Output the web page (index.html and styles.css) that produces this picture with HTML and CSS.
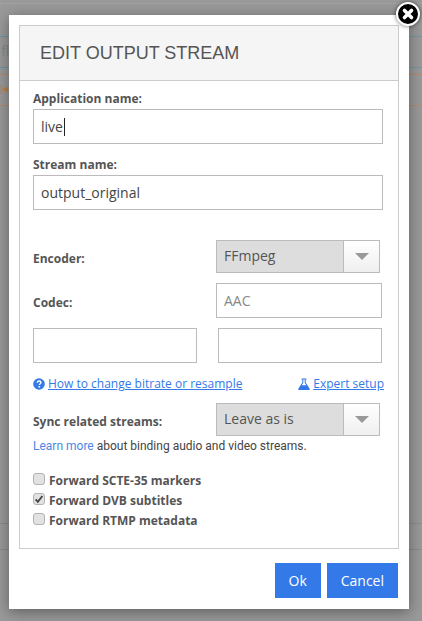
FILE: index.html
```html
<!DOCTYPE html>
<html lang="en">
<head>
  <meta charset="UTF-8" />
  <title>Edit output stream</title>
  <link rel="stylesheet" href="styles.css">
</head>
<body>

  <div class="backdrop">
    <div class="bg-dots"></div>
    <div class="bg-text">fl</div>
    <svg class="bg-icon" width="9" height="9" viewBox="0 0 9 9">
      <path d="M3 1H0.700V8H3" fill="none" stroke="#a98a74" stroke-width="1"/>
      <path d="M2.500 3.500H5.500V1L9 4.500 5.500 8V5.500H2.500Z" fill="#c08048"/>
    </svg>
    <div class="bg-line teal line-1"></div>
    <div class="bg-line teal line-2"></div>
    <div class="bg-line orange line-3"></div>
    <div class="bg-line orange line-4"></div>
    <div class="bg-line grey line-5"></div>
    <div class="bg-line grey line-6"></div>
  </div>

  <div class="modal">
    <a class="close-btn">
      <svg width="20" height="20" viewBox="0 0 20 20">
        <path d="M6.500 6.500 13.500 13.500M13.500 6.500 6.500 13.500" stroke="#fff" stroke-width="3.600" stroke-linecap="round"/>
      </svg>
    </a>

    <div class="panel">
      <div class="panel-head">
        <h2>EDIT OUTPUT STREAM</h2>
      </div>

      <div class="panel-body">
        <label class="field-label">Application name:</label>
        <div class="input input-active">live<span class="caret"></span></div>

        <label class="field-label second">Stream name:</label>
        <div class="input">output_original</div>

        <div class="row encoder-row">
          <label class="field-label">Encoder:</label>
          <div class="select">
            <span class="select-value">FFmpeg</span>
            <span class="select-arrow"><i></i></span>
          </div>
        </div>

        <div class="row codec-row">
          <label class="field-label">Codec:</label>
          <div class="input codec-input">AAC</div>
        </div>

        <div class="pair">
          <div class="input"></div>
          <div class="input"></div>
        </div>

        <div class="links">
          <a class="link">
            <svg width="12" height="12" viewBox="0 0 12 12">
              <circle cx="6" cy="6" r="5.800" fill="#337ae8"/>
              <path d="M4.200 4.700C4.300 3.600 5 3 6.100 3 7.200 3 7.900 3.600 7.900 4.500 7.900 5.700 6.300 5.700 6.300 7" fill="none" stroke="#fff" stroke-width="1.400"/>
              <rect x="5.500" y="8" width="1.600" height="1.500" fill="#fff"/>
            </svg>
            <u>How to change bitrate or resample</u>
          </a>
          <a class="link expert">
            <svg width="12" height="12" viewBox="0 0 12 12">
              <path d="M3.500 0.500H8.500V1.500H7.700V4.500L11.700 10.700C12 11.300 11.700 12 11 12H1C0.300 12 0 11.300 0.300 10.700L4.300 4.500V1.500H3.500Z" fill="#337ae8"/>
              <path d="M5.300 1.500H6.700V4.800L8.200 7.200H3.800L5.300 4.800Z" fill="#fff"/>
            </svg>
            <u>Expert setup</u>
          </a>
        </div>

        <div class="row sync-row">
          <label class="field-label">Sync related streams:</label>
          <div class="select">
            <span class="select-value">Leave as is</span>
            <span class="select-arrow"><i></i></span>
          </div>
        </div>

        <p class="note"><a class="note-link">Learn more</a> about binding audio and video streams.</p>

        <div class="checks">
          <label class="check"><span class="box"></span>Forward SCTE-35 markers</label>
          <label class="check">
            <span class="box">
              <svg width="10" height="10" viewBox="0 0 11 11">
                <path d="M1.800 6 4.200 8.600 9.200 2.200" fill="none" stroke="#444" stroke-width="2"/>
              </svg>
            </span>Forward DVB subtitles
          </label>
          <label class="check"><span class="box"></span>Forward RTMP metadata</label>
        </div>
      </div>
    </div>

    <div class="modal-foot">
      <button class="btn btn-ok">Ok</button>
      <button class="btn">Cancel</button>
    </div>
  </div>

</body>
</html>
```

FILE: styles.css
```css
html, body {
  margin: 0;
  height: 100%;
  overflow: hidden;
}

body {
  background-color: #9a9a9a;
  font-family: "Open Sans", sans-serif;
  color: #555;
}

.backdrop {
  position: absolute;
  top: 0;
  left: 0;
  right: 0;
  bottom: 0;
}

.bg-dots {
  position: absolute;
  left: 0;
  right: 0;
  top: 3px;
  border-top: 1px dotted #a8a8a8;
}

.bg-text {
  position: absolute;
  left: 1px;
  top: 41px;
  font-size: 14px;
  color: #7f8b8f;
}

.bg-icon {
  position: absolute;
  left: 0;
  top: 85px;
}

.bg-line {
  position: absolute;
  left: 0;
  right: 0;
  height: 1px;
}

.teal { background-color: #6c9aa0; }
.orange { background-color: #b98a68; }
.grey { background-color: #8c8c8c; }

.line-1 { top: 36px; }
.line-2 { top: 67px; }
.line-3 { top: 74px; }
.line-4 { top: 105px; }
.line-5 { top: 523px; }
.line-6 { top: 549px; }

.modal {
  position: absolute;
  left: 9px;
  top: 15px;
  width: 400px;
  height: 594px;
  box-sizing: border-box;
  padding: 10px;
  background-color: #fff;
  box-shadow: 0 3px 14px rgba(0,0,0,0.4);
}

.close-btn {
  position: absolute;
  top: -13px;
  right: -11px;
  width: 20px;
  height: 20px;
  display: flex;
  border: 2px solid #fff;
  border-radius: 50%;
  background-color: #000;
  box-shadow: 0 0 4px rgba(0,0,0,0.6);
}

.panel {
  height: 524px;
  box-sizing: border-box;
  border: 1px solid #ccc;
}

.panel-head {
  height: 55px;
  box-sizing: border-box;
  padding: 0 20px;
  display: flex;
  align-items: center;
  background-color: #f5f5f5;
  border-bottom: 1px solid #ccc;
}

h2 {
  margin: 0;
  font-family: "Liberation Sans", sans-serif;
  font-size: 18px;
  font-weight: normal;
  color: #555;
}

.panel-body {
  padding: 10px 15px 0 13px;
}

.field-label {
  display: block;
  font-size: 12px;
  font-weight: bold;
  line-height: 16px;
  color: #555;
}

.field-label.second {
  margin-top: 13px;
}

.input {
  height: 35px;
  box-sizing: border-box;
  margin-top: 2px;
  padding: 0 7px;
  border: 1px solid #bbb;
  font-size: 14px;
  line-height: 33px;
  color: #444;
  background-color: #fff;
}

.caret {
  display: inline-block;
  width: 1px;
  height: 18px;
  margin-left: 1px;
  vertical-align: -4px;
  background-color: #222;
}

.row {
  display: flex;
  align-items: center;
  justify-content: space-between;
  padding-right: 1px;
}

.row .field-label {
  padding-top: 5px;
}

.encoder-row {
  margin-top: 30px;
  padding-right: 3px;
}

.codec-row {
  margin-top: 10px;
  padding-right: 1px;
}

.codec-row .input {
  width: 166px;
  margin-top: 0;
  color: #888;
}

.sync-row {
  margin-top: 11px;
  padding-right: 3px;
}

.select {
  width: 164px;
  height: 33px;
  box-sizing: border-box;
  display: flex;
  border: 1px solid #bbb;
  font-size: 14px;
  color: #555;
}

.select-value {
  flex: 1;
  padding-left: 7px;
  line-height: 29px;
  background-color: #ddd;
}

.select-arrow {
  width: 35px;
  display: flex;
  align-items: center;
  justify-content: center;
  border-left: 1px solid #bbb;
  background: linear-gradient(#fff, #efefef);
}

.select-arrow i {
  width: 0;
  height: 0;
  border-left: 7px solid transparent;
  border-right: 7px solid transparent;
  border-top: 7px solid #999;
}

.pair {
  display: flex;
  justify-content: space-between;
  margin-top: 10px;
  padding-right: 1px;
}

.pair .input {
  width: 164px;
  margin-top: 0;
}

.links {
  display: flex;
  justify-content: space-between;
  margin-top: 13px;
  margin-right: -1px;
  font-size: 12px;
  line-height: 16px;
}

.link {
  display: flex;
  align-items: center;
  gap: 3px;
  color: #337ae8;
}

.expert {
  margin-top: -1px;
}

.note {
  margin: 2px 0 0;
  font-family: Roboto, sans-serif;
  font-size: 12px;
  line-height: 16px;
  color: #444;
}

.note-link {
  color: #4a86e8;
}

.checks {
  margin-top: 16px;
}

.check {
  display: flex;
  align-items: center;
  height: 20px;
  font-size: 12px;
  font-weight: bold;
  color: #555;
}

.box {
  width: 12px;
  height: 12px;
  box-sizing: border-box;
  margin-right: 4px;
  margin-top: -3px;
  display: flex;
  align-items: center;
  justify-content: center;
  border: 1px solid #b4b4b4;
  border-radius: 3px;
  background-color: #e2e2e2;
}

.modal-foot {
  display: flex;
  justify-content: flex-end;
  gap: 6px;
  margin-top: 14px;
  padding-right: 1px;
}

.btn {
  height: 35px;
  padding: 0 14px;
  border: none;
  background-color: #337ae8;
  color: #fff;
  font-family: "Open Sans", sans-serif;
  font-size: 14px;
}

.btn-ok {
  width: 46px;
  padding: 0;
}
```
